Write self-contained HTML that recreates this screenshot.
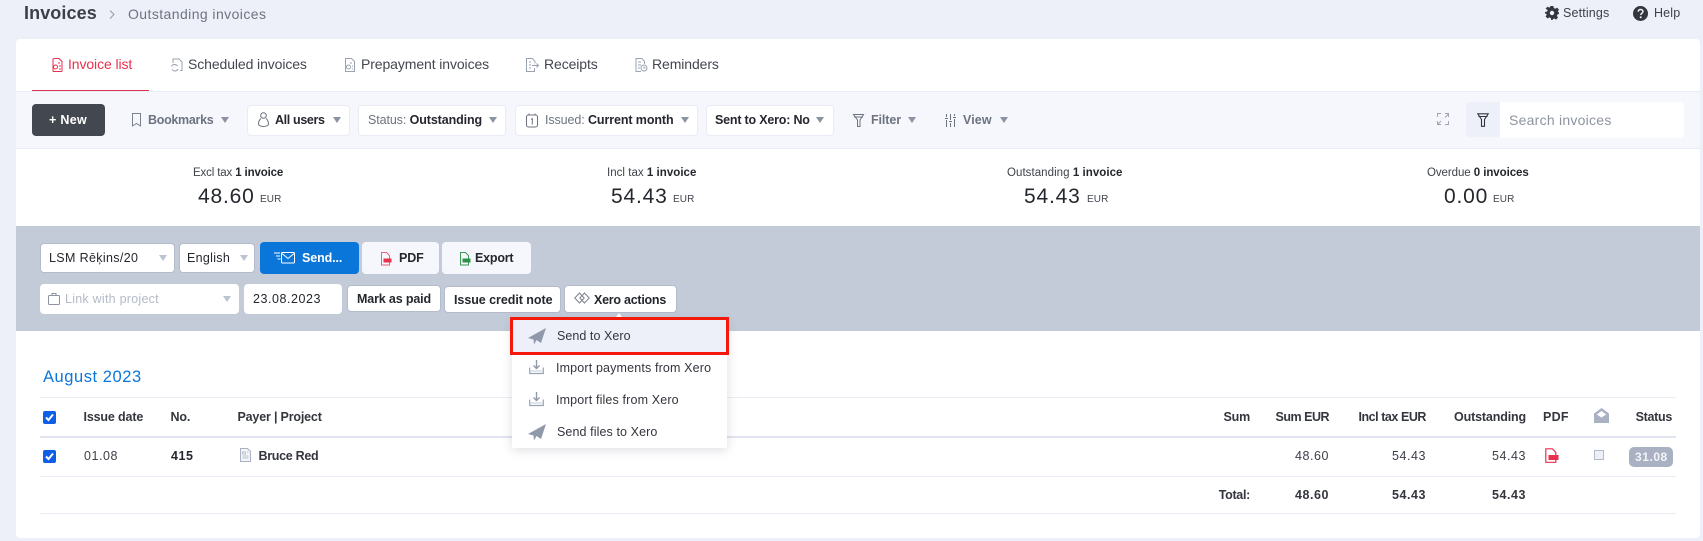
<!DOCTYPE html>
<html lang="en"><head><meta charset="utf-8"><title>Invoices</title>
<style>
html,body{margin:0;padding:0}
body{width:1703px;height:541px;overflow:hidden;position:relative;background:#edf0f9;font-family:"Liberation Sans",sans-serif;color:#24272d;font-size:13px}
.a{position:absolute;box-sizing:border-box}
.t{position:absolute;white-space:nowrap;height:20px;line-height:20px;letter-spacing:.35px}
.b{font-weight:700}
.box{position:absolute;box-sizing:border-box;background:#fff;border-radius:4px}
.wb{border:1px solid #e9ecf4}
.gb{border:1px solid #b4bccb}
.arr{position:absolute;width:0;height:0;border-left:4.5px solid transparent;border-right:4.5px solid transparent;border-top:6px solid #8b92a1}
.arrl{border-top-color:#bcc3d0}
svg{position:absolute;overflow:visible}
.g{color:#6d7380}
.r{color:#e8304f}
.line{position:absolute;left:40px;width:1636px;height:1px;background:#eaedf5}
</style></head><body>

<div class="t b" style="left:24px;top:3px;font-size:18px;letter-spacing:.1px;color:#3b3f47">Invoices</div>
<svg style="left:109px;top:10px" width="6" height="9" viewBox="0 0 6 9"><path d="M1 .5 5 4.5 1 8.5" fill="none" stroke="#8d93a0" stroke-width=".9"/></svg>
<div class="t g" style="left:128px;top:4px;font-size:14px;letter-spacing:.42px">Outstanding invoices</div>

<svg style="left:1545px;top:6px" width="14" height="14" viewBox="0 0 14 14"><path d="M5.6 0h2.800l.4 2 1.500.7L12 1.600l2 2-1.100 1.700.6 1.300L14 6v2l-1.500.4-.6 1.500 1.100 1.700-2 2-1.700-1.100-1.500.6L7.800 14H6.200l-.4-2-1.500-.6L2.600 12.500l-2-2 1.100-1.700-.7-1.500L0 8V6l2-.4.700-1.500L.6 2.600l2-2 1.700 1.100z" fill="#33363d"/><circle cx="7" cy="7" r="2.200" fill="#edf0f9"/></svg>
<div class="t" style="left:1563px;top:3px;font-size:12.500px;letter-spacing:.15px;color:#3b3f47">Settings</div>
<svg style="left:1633px;top:6px" width="15" height="15" viewBox="0 0 15 15"><circle cx="7.500" cy="7.500" r="7.500" fill="#33363d"/><path d="M5.200 5.700c.1-1.500 1.100-2.200 2.400-2.200s2.400.8 2.400 2c0 1.700-2.200 1.700-2.200 3.500" fill="none" stroke="#edf0f9" stroke-width="1.500"/><circle cx="7.700" cy="11.300" r="1" fill="#edf0f9"/></svg>
<div class="t" style="left:1654px;top:3px;font-size:12.500px;letter-spacing:.15px;color:#3b3f47">Help</div>

<div class="a" style="left:16px;top:39px;width:1684px;height:499px;background:#fff;border-radius:4px"></div>

<svg style="left:51px;top:58px" width="13" height="14" viewBox="0 0 13 14"><path d="M3 .5h5l3 3v9.500a.5.5 0 0 1-.5.5h-8a.5.5 0 0 1-.5-.5V1z" fill="none" stroke="#e8304f"/><circle cx="4.500" cy="9" r="2" fill="none" stroke="#e8304f"/><path d="M7 5h2M8 8h2M8 11h2" stroke="#e8304f"/></svg>
<div class="t r" style="left:68px;top:54px;font-size:14px;letter-spacing:-.1px">Invoice list</div>
<div class="a" style="left:32px;top:90px;width:117px;height:1px;background:#e8304f"></div>

<svg style="left:170px;top:58px" width="13" height="14" viewBox="0 0 13 14"><path d="M3 5V1h6l3 3v8.500h-2M1.500 8.500a3.500 3.500 0 0 1 6 -.5M8 11a3.500 3.500 0 0 1-6 .5" fill="none" stroke="#9aa1af"/></svg>
<div class="t" style="left:188px;top:54px;font-size:14px;letter-spacing:-.1px;color:#43474f">Scheduled invoices</div>

<svg style="left:344px;top:58px" width="12" height="14" viewBox="0 0 12 14"><path d="M1.500.5h6l3 3v10h-9z" fill="none" stroke="#9aa1af"/><circle cx="4.500" cy="9" r="2" fill="none" stroke="#9aa1af"/><path d="M6 5h2M8 8h1M8 11h1" stroke="#9aa1af"/></svg>
<div class="t" style="left:361px;top:54px;font-size:14px;letter-spacing:-.1px;color:#43474f">Prepayment invoices</div>

<svg style="left:526px;top:58px" width="13" height="14" viewBox="0 0 13 14"><path d="M9 5.500V3.500L6.500.5h-6v13h8V10M3 4h2M3 7h2M3 10h2M6 7.500h6.500M10.500 5.500l2 2-2 2" fill="none" stroke="#9aa1af"/></svg>
<div class="t" style="left:544px;top:54px;font-size:14px;letter-spacing:-.1px;color:#43474f">Receipts</div>

<svg style="left:635px;top:58px" width="13" height="14" viewBox="0 0 13 14"><path d="M9.500 6V3.500L7 .5H1v13h5M3 4h3M3 7h3M3 10h2" fill="none" stroke="#9aa1af"/><circle cx="9" cy="10" r="3" fill="none" stroke="#9aa1af"/><path d="M9 8.500V10h1.500" fill="none" stroke="#9aa1af"/></svg>
<div class="t" style="left:652px;top:54px;font-size:14px;letter-spacing:-.1px;color:#43474f">Reminders</div>

<div class="a" style="left:16px;top:91px;width:1684px;height:58px;background:#f6f7fc;border-top:1px solid #ebeef6;border-bottom:1px solid #ebeef6"></div>

<div class="a" style="left:32px;top:104px;width:73px;height:32px;background:#434750;border-radius:4px"></div>
<div class="t b" style="left:49px;top:110px;color:#fff;font-size:12.500px;letter-spacing:.3px">+ New</div>

<svg style="left:132px;top:113px" width="9" height="14" viewBox="0 0 9 14"><path d="M.5.500h8v12.500L4.500 10.500.5 13z" fill="none" stroke="#7b818e"/></svg>
<div class="t b g" style="left:148px;top:110px;font-size:12.500px;letter-spacing:-.3px">Bookmarks</div>
<div class="arr" style="left:221px;top:117px"></div>

<div class="box wb" style="left:247px;top:105px;width:103px;height:31px"></div>
<svg style="left:258px;top:112px" width="11" height="15" viewBox="0 0 11 15"><circle cx="5.500" cy="3.500" r="2.800" fill="none" stroke="#6d7380"/><path d="M2.800 6.500C1.300 8 .5 10 .5 12c0 1.500 2.500 2.500 5 2.500s5-1 5-2.500c0-2-.8-4-2.300-5.500" fill="none" stroke="#6d7380"/></svg>
<div class="t b" style="left:275px;top:110px;font-size:12.500px;letter-spacing:-.35px">All users</div>
<div class="arr" style="left:333px;top:117px"></div>

<div class="box wb" style="left:358px;top:105px;width:148px;height:31px"></div>
<div class="t" style="left:368px;top:110px;font-size:12.500px;letter-spacing:-.1px"><span class="g">Status:</span> <b>Outstanding</b></div>
<div class="arr" style="left:489px;top:117px"></div>

<div class="box wb" style="left:515px;top:105px;width:183px;height:31px"></div>
<svg style="left:526px;top:113px" width="12" height="15" viewBox="0 0 12 15"><rect x=".5" y="2" width="11" height="12" rx="2" fill="none" stroke="#6d7380"/><path d="M3 .5v2M9 .500v2M5 6.500l1.300-.9V11.500" fill="none" stroke="#6d7380"/></svg>
<div class="t" style="left:545px;top:110px;font-size:12.500px;letter-spacing:-.1px"><span class="g">Issued:</span> <b>Current month</b></div>
<div class="arr" style="left:681px;top:117px"></div>

<div class="box wb" style="left:706px;top:105px;width:128px;height:31px"></div>
<div class="t b" style="left:715px;top:110px;font-size:12.500px;letter-spacing:-.2px">Sent to Xero: No</div>
<div class="arr" style="left:816px;top:117px"></div>

<svg style="left:853px;top:114px" width="11" height="13" viewBox="0 0 11 13"><path d="M.5.500h10L7 6v6.500H4.500V6zM1 3h9" fill="none" stroke="#6d7380"/></svg>
<div class="t b g" style="left:871px;top:110px;font-size:12.500px;letter-spacing:-.1px">Filter</div>
<div class="arr" style="left:908px;top:117px"></div>
<svg style="left:945px;top:114px" width="11" height="13" viewBox="0 0 11 13"><path d="M1.500 0v3M1.500 6v7M5.500 0v6M5.500 9v4M9.500 0v2M9.500 5v8M0 4.500h3M4 7.500h3M8 3.500h3" fill="none" stroke="#6d7380"/></svg>
<div class="t b g" style="left:963px;top:110px;font-size:12.500px;letter-spacing:.1px">View</div>
<div class="arr" style="left:1000px;top:117px"></div>

<svg style="left:1437px;top:113px" width="12" height="12" viewBox="0 0 12 12"><path d="M.5 4V.5H4M8 .5h3.500V4M11.500 1 8 4.500M.5 8v3.500H4M.5 11.500 4 8M8 11.500h3.500V8" fill="none" stroke="#9aa1af" stroke-width=".9"/></svg>
<div class="box" style="left:1466px;top:102px;width:35px;height:35px;background:#edf0f9;border-radius:4px 0 0 4px"></div>
<svg style="left:1477px;top:113px" width="12" height="14" viewBox="0 0 12 14"><path d="M.8.800h10.400L7.500 6.500v6.800H4.500V6.500zM1.500 3.500h9" fill="none" stroke="#33363d" stroke-width="1.100"/></svg>
<div class="box" style="left:1500px;top:102px;width:184px;height:36px;border-radius:0 4px 4px 0"></div>
<div class="t" style="left:1509px;top:110px;font-size:14px;letter-spacing:.25px;color:#8d93a0">Search invoices</div>

<div class="t" style="left:193px;top:163px;font-size:11.500px;letter-spacing:-.14px"><span style="color:#3f434b">Excl tax</span> <b>1 invoice</b></div>
<div class="t" style="left:198px;top:187px;font-size:21px;letter-spacing:.8px">48.60</div>
<div class="t" style="left:260px;top:190px;font-size:10px;letter-spacing:.1px;color:#3f434b">EUR</div>
<div class="t" style="left:607px;top:163px;font-size:11.500px;letter-spacing:.03px"><span style="color:#3f434b">Incl tax</span> <b>1 invoice</b></div>
<div class="t" style="left:611px;top:187px;font-size:21px;letter-spacing:.8px">54.43</div>
<div class="t" style="left:673px;top:190px;font-size:10px;letter-spacing:.1px;color:#3f434b">EUR</div>
<div class="t" style="left:1007px;top:163px;font-size:11.500px;letter-spacing:.05px"><span style="color:#3f434b">Outstanding</span> <b>1 invoice</b></div>
<div class="t" style="left:1024px;top:187px;font-size:21px;letter-spacing:.8px">54.43</div>
<div class="t" style="left:1087px;top:190px;font-size:10px;letter-spacing:.1px;color:#3f434b">EUR</div>
<div class="t" style="left:1427px;top:163px;font-size:11.500px;letter-spacing:-.07px"><span style="color:#3f434b">Overdue</span> <b>0 invoices</b></div>
<div class="t" style="left:1444px;top:187px;font-size:21px;letter-spacing:.8px">0.00</div>
<div class="t" style="left:1493px;top:190px;font-size:10px;letter-spacing:.1px;color:#3f434b">EUR</div>

<div class="a" style="left:16px;top:226px;width:1684px;height:105px;background:#c3cbd9"></div>

<div class="box gb" style="left:40px;top:243px;width:135px;height:30px"></div>
<div class="t" style="left:49px;top:248px;font-size:12.500px;letter-spacing:.35px">LSM Rēķins/20</div>
<div class="arr arrl" style="left:159px;top:255px"></div>
<div class="box gb" style="left:179px;top:243px;width:76px;height:30px"></div>
<div class="t" style="left:187px;top:248px;font-size:12.500px;letter-spacing:.3px">English</div>
<div class="arr arrl" style="left:240px;top:255px"></div>

<div class="box" style="left:260px;top:242px;width:99px;height:32px;background:#0b76da"></div>
<svg style="left:274px;top:251px" width="21" height="14" viewBox="0 0 21 14"><rect x="7.500" y="1.500" width="13" height="10.500" rx="1" fill="none" stroke="#fff"/><path d="M8 2.500l6 5 6-5M0 2h6M2 5h4M3.500 8h3" fill="none" stroke="#fff"/></svg>
<div class="t b" style="left:302px;top:248px;color:#fff;font-size:12.500px;letter-spacing:-.1px">Send...</div>

<div class="box" style="left:362px;top:242px;width:77px;height:32px;background:#f6f7fc"></div>
<svg style="left:380px;top:252px" width="12" height="14" viewBox="0 0 12 14"><path d="M1.500.5h5l3 3v9.500h-8z" fill="none" stroke="#e8607a"/><rect x="3.500" y="6.500" width="8" height="4" fill="#e8304f"/></svg>
<div class="t b" style="left:399px;top:248px;font-size:12.500px;letter-spacing:-.1px">PDF</div>

<div class="box" style="left:442px;top:242px;width:89px;height:32px;background:#f6f7fc"></div>
<svg style="left:459px;top:252px" width="12" height="14" viewBox="0 0 12 14"><path d="M1.500.5h5l3 3v9.500h-8z" fill="none" stroke="#3b9a53"/><rect x="3.500" y="6.500" width="8" height="4" fill="#2f8f49"/></svg>
<div class="t b" style="left:475px;top:248px;font-size:12.500px;letter-spacing:-.2px">Export</div>

<div class="box" style="left:40px;top:284px;width:199px;height:30px"></div>
<svg style="left:48px;top:293px" width="12" height="12" viewBox="0 0 12 12"><rect x=".5" y="2.500" width="11" height="9" rx="1" fill="none" stroke="#8d93a0"/><path d="M4 2.500V.5h4v2" fill="none" stroke="#8d93a0"/></svg>
<div class="t" style="left:65px;top:289px;font-size:12.500px;letter-spacing:.25px;color:#b3bac7">Link with project</div>
<div class="arr arrl" style="left:223px;top:296px"></div>
<div class="box" style="left:244px;top:284px;width:98px;height:30px"></div>
<div class="t" style="left:253px;top:289px;font-size:12.500px;letter-spacing:.55px">23.08.2023</div>

<div class="box gb" style="left:347px;top:285px;width:94px;height:27px"></div>
<div class="t b" style="left:357px;top:289px;font-size:12.500px;letter-spacing:-.15px">Mark as paid</div>
<div class="box gb" style="left:444px;top:286px;width:117px;height:27px"></div>
<div class="t b" style="left:454px;top:290px;font-size:12.500px;letter-spacing:-.05px">Issue credit note</div>
<div class="box gb" style="left:564px;top:285px;width:113px;height:28px"></div>
<svg style="left:574px;top:292px" width="16" height="12" viewBox="0 0 16 12"><path d="M5.500 1 .8 6l4.700 5L10.200 6zM10.500 1 5.800 6l4.700 5L15.200 6z" fill="none" stroke="#7b818e"/></svg>
<div class="t b" style="left:594px;top:290px;font-size:12.500px;letter-spacing:-.25px">Xero actions</div>

<div class="line" style="top:397px"></div>
<div class="t" style="left:43px;top:367px;font-size:16.500px;letter-spacing:.55px;color:#0b76da">August 2023</div>

<div class="box" style="left:43px;top:411px;width:13px;height:13px;background:#0e5fe8;border-radius:2px"></div>
<svg style="left:45px;top:413px" width="9" height="9" viewBox="0 0 9 9"><path d="M1 4.500 3.500 7 8 1.500" fill="none" stroke="#fff" stroke-width="2"/></svg>
<div class="t b" style="left:83.500px;top:407px;font-size:12.500px;letter-spacing:-.15px;color:#33363d">Issue date</div>
<div class="t b" style="left:170.500px;top:407px;font-size:12.500px;letter-spacing:-.15px;color:#33363d">No.</div>
<div class="t b" style="left:237.500px;top:407px;font-size:12.500px;letter-spacing:-.18px;color:#33363d">Payer | Project</div>
<div class="t b" style="right:453px;top:407px;font-size:12.500px;letter-spacing:-.2px;color:#33363d">Sum</div>
<div class="t b" style="right:374px;top:407px;font-size:12.500px;letter-spacing:-.5px;color:#33363d">Sum EUR</div>
<div class="t b" style="right:277px;top:407px;font-size:12.500px;letter-spacing:-.45px;color:#33363d">Incl tax EUR</div>
<div class="t b" style="right:177px;top:407px;font-size:12.500px;letter-spacing:-.15px;color:#33363d">Outstanding</div>
<div class="t b" style="left:1543px;top:407px;font-size:12.500px;letter-spacing:.25px;color:#33363d">PDF</div>
<svg style="left:1594px;top:408px" width="15" height="15" viewBox="0 0 15 15"><path d="M0 5.500 7.500 0 15 5.500V15H0z" fill="#a9b1c2"/><path d="M2.800 6.500 7.500 3l4.700 3.500-4.700 3z" fill="#fff"/></svg>
<div class="t b" style="right:31px;top:407px;font-size:12.500px;letter-spacing:-.3px;color:#33363d">Status</div>
<div class="a" style="left:40px;top:436px;width:1636px;height:2px;background:#e0e4ee"></div>

<div class="box" style="left:43px;top:450px;width:13px;height:13px;background:#0e5fe8;border-radius:2px"></div>
<svg style="left:45px;top:452px" width="9" height="9" viewBox="0 0 9 9"><path d="M1 4.500 3.500 7 8 1.500" fill="none" stroke="#fff" stroke-width="2"/></svg>
<div class="t" style="left:84px;top:446px;font-size:12.500px;letter-spacing:.55px;color:#3b3f47">01.08</div>
<div class="t b" style="left:171px;top:446px;font-size:12.500px;letter-spacing:.55px">415</div>
<svg style="left:240px;top:448px" width="11" height="14" viewBox="0 0 11 14"><path d="M.5.500h7l3 3v10H.5z" fill="#f3f5f9" stroke="#a9b1c2"/><path d="M2.500 4h3v2h-3zM2.500 8h6M2.500 10h6M7 4h1.500" fill="none" stroke="#a9b1c2" stroke-width=".8"/></svg>
<div class="t b" style="left:258.500px;top:446px;font-size:12.500px;letter-spacing:-.3px;color:#33363d">Bruce Red</div>
<div class="t" style="right:374px;top:446px;font-size:12.500px;letter-spacing:.55px;color:#3b3f47">48.60</div>
<div class="t" style="right:277px;top:446px;font-size:12.500px;letter-spacing:.55px;color:#3b3f47">54.43</div>
<div class="t" style="right:177px;top:446px;font-size:12.500px;letter-spacing:.55px;color:#3b3f47">54.43</div>
<svg style="left:1545px;top:448px" width="14" height="15" viewBox="0 0 14 15"><path d="M.8.800h6.500l3.500 3.500v10H.8z" fill="none" stroke="#e8304f" stroke-width="1.200"/><rect x="3.500" y="7" width="10" height="5" fill="#e8304f"/></svg>
<div class="a" style="left:1594px;top:450px;width:10px;height:10px;background:#eef0f7;border:1px solid #b3bac7"></div>
<div class="box" style="left:1629px;top:447px;width:44px;height:20px;background:#a9b1c2;border-radius:5px"></div>
<div class="t b" style="left:1635px;top:447px;font-size:12px;letter-spacing:.55px;color:#f3f5f9">31.08</div>

<div class="line" style="top:476px"></div>
<div class="t b" style="right:453px;top:485px;font-size:12.500px;letter-spacing:-.3px;color:#33363d">Total:</div>
<div class="t b" style="right:374px;top:485px;font-size:12.500px;letter-spacing:.55px;color:#33363d">48.60</div>
<div class="t b" style="right:277px;top:485px;font-size:12.500px;letter-spacing:.55px;color:#33363d">54.43</div>
<div class="t b" style="right:177px;top:485px;font-size:12.500px;letter-spacing:.55px;color:#33363d">54.43</div>
<div class="line" style="top:513px"></div>

<div class="a" style="left:512px;top:319px;width:215px;height:129px;background:#fff;box-shadow:0 2px 10px rgba(60,70,90,.18)"></div>
<div class="a" style="left:616px;top:313px;width:0;height:0;border-left:3px solid transparent;border-right:3px solid transparent;border-bottom:4px solid #fff"></div>
<div class="a" style="left:512px;top:320px;width:215px;height:33px;background:#edf0f9"></div>
<div class="a" style="left:510px;top:317px;width:219px;height:38px;border:3px solid #f5190c"></div>

<svg style="left:528px;top:328px" width="18" height="17" viewBox="0 0 18 17"><path d="M0 10 18 0 13 15 8.500 12 6 16.500 5.500 11.500z" fill="#8f99aa"/></svg>
<div class="t" style="left:557px;top:326px;font-size:12.500px;letter-spacing:.05px;color:#33363d">Send to Xero</div>
<svg style="left:529px;top:360px" width="15" height="14" viewBox="0 0 15 14"><path d="M.7 7.500v6h13.600v-6" fill="none" stroke="#9aa3b3" stroke-width="1.200"/><path d="M7.500 0v8M4.500 5.500l3 3 3-3" fill="none" stroke="#8f99aa" stroke-width="1.400"/><path d="M.7 11h13.600" stroke="#c3cbd9"/></svg>
<div class="t" style="left:556px;top:358px;font-size:12.500px;letter-spacing:.15px;color:#33363d">Import payments from Xero</div>
<svg style="left:529px;top:392px" width="15" height="14" viewBox="0 0 15 14"><path d="M.7 7.500v6h13.600v-6" fill="none" stroke="#9aa3b3" stroke-width="1.200"/><path d="M7.500 0v8M4.500 5.500l3 3 3-3" fill="none" stroke="#8f99aa" stroke-width="1.400"/><path d="M.7 11h13.600" stroke="#c3cbd9"/></svg>
<div class="t" style="left:556px;top:390px;font-size:12.500px;letter-spacing:.15px;color:#33363d">Import files from Xero</div>
<svg style="left:528px;top:424px" width="18" height="17" viewBox="0 0 18 17"><path d="M0 10 18 0 13 15 8.500 12 6 16.500 5.500 11.500z" fill="#8f99aa"/></svg>
<div class="t" style="left:557px;top:422px;font-size:12.500px;letter-spacing:.1px;color:#33363d">Send files to Xero</div>

</body></html>
